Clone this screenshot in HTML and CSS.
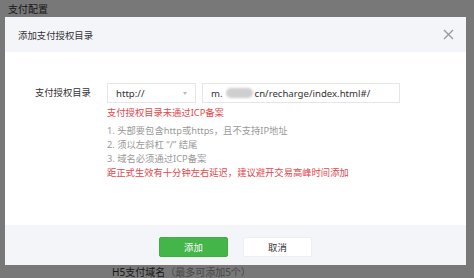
FILE: index.html
```html
<!DOCTYPE html>
<html lang="zh-CN">
<head>
  <meta charset="UTF-8" />
  <meta name="viewport" content="width=device-width, initial-scale=1.0"/>
  <title>支付配置</title>
  <link rel="stylesheet" href="styles.css">
</head>
<body>
  <div class="page">
    <h2 class="page-title">支付配置</h2>
    <div class="h5-row">H5支付域名<span class="h5-tip">（最多可添加5个）</span></div>
  </div>

  <div class="mask">
    <div class="dialog">
      <div class="dialog-head">
        <h3>添加支付授权目录</h3>
        <button class="close" aria-label="关闭">
          <svg width="11" height="11" viewBox="0 0 11 11"><path d="M1 1L10 10M10 1L1 10" stroke="#9a9a9a" stroke-width="1.4" fill="none"/></svg>
        </button>
      </div>

      <div class="dialog-body">
        <div class="form-row">
          <label class="form-label">支付授权目录</label>
          <div class="form-field">
            <div class="inputs">
              <div class="select">
                <span>http://</span>
                <span class="caret"></span>
              </div>
              <div class="text-input">m.<span class="blur"></span>cn/recharge/index.html#/</div>
            </div>
            <p class="error">支付授权目录未通过ICP备案</p>
            <ol class="tips">
              <li>1. 头部要包含http或https，且不支持IP地址</li>
              <li>2. 须以左斜杠 “/” 结尾</li>
              <li>3. 域名必须通过ICP备案</li>
            </ol>
            <p class="warn">距正式生效有十分钟左右延迟，建议避开交易高峰时间添加</p>
          </div>
        </div>
      </div>

      <div class="dialog-foot">
        <button class="btn btn-primary">添加</button>
        <button class="btn btn-default">取消</button>
      </div>
    </div>
  </div>
</body>
</html>
```

FILE: styles.css
```css
body {
  margin: 0;
  font-family: "Noto Sans", "Noto Sans CJK SC", sans-serif;
  font-size: 9.3px;
  color: #333;
  background: #fff;
  height: 278px;
  overflow: hidden;
}
.page {
  padding: 2px 8px;
}
.page-title {
  margin: 0;
  font-size: 10px;
  font-weight: normal;
  line-height: 14px;
}
.h5-row {
  margin-top: 249px;
  padding-left: 104px;
  font-size: 10px;
  line-height: 14px;
}
.h5-tip {
  color: #999;
}

.mask {
  position: fixed;
  inset: 0;
  background: rgba(0, 0, 0, 0.53);
}
.dialog {
  position: absolute;
  left: 5px;
  top: 17px;
  width: 461px;
  height: 248px;
  background: #fff;
  display: flex;
  flex-direction: column;
}
.dialog-head {
  height: 35px;
  background: #f4f5f9;
  display: flex;
  align-items: center;
  justify-content: space-between;
  padding: 0 12px 0 13px;
}
.dialog-head h3 {
  margin: 0;
  font-size: 9.4px;
  font-weight: normal;
  color: #333;
}
.close {
  border: none;
  background: none;
  padding: 0;
  width: 11px;
  height: 11px;
  display: flex;
}

.dialog-body {
  flex: 1;
  padding: 31px 0 0 30px;
}
.form-row {
  display: flex;
}
.form-label {
  width: 72px;
  line-height: 20px;
  color: #333;
}
.inputs {
  display: flex;
  gap: 6px;
}
.select, .text-input {
  height: 20px;
  box-sizing: border-box;
  border: 1px solid #e4e6eb;
  display: flex;
  align-items: center;
  padding: 0 8px;
  color: #333;
  font-size: 9.6px;
}
.select {
  width: 89px;
  justify-content: space-between;
}
.caret {
  width: 0;
  height: 0;
  border-left: 2.5px solid transparent;
  border-right: 2.5px solid transparent;
  border-top: 3px solid #bbb;
}
.text-input {
  width: 198px;
}
.blur {
  display: inline-block;
  width: 27px;
  height: 10px;
  margin: 0 2px 0 3px;
  border-radius: 5px;
  background: #cfcfcf;
  filter: blur(1.2px);
}
.error, .warn {
  margin: 0;
  line-height: 14px;
  color: #e2474d;
}
.error {
  margin-top: 3px;
}
.tips {
  list-style: none;
  margin: 4px 0 0;
  padding: 0;
  line-height: 14px;
  color: #999;
}

.dialog-foot {
  height: 40px;
  background: #f4f5f9;
  display: flex;
  justify-content: center;
  align-items: flex-start;
  gap: 15px;
  padding-top: 12px;
  box-sizing: border-box;
}
.btn {
  width: 69px;
  height: 20px;
  font-family: inherit;
  font-size: 9.4px;
  border-radius: 2px;
  padding: 0;
  cursor: pointer;
}
.btn-primary {
  background: #44b549;
  border: 1px solid #3fae45;
  color: #fff;
}
.btn-default {
  background: #fff;
  border: 1px solid #eceef2;
  color: #333;
}
```
